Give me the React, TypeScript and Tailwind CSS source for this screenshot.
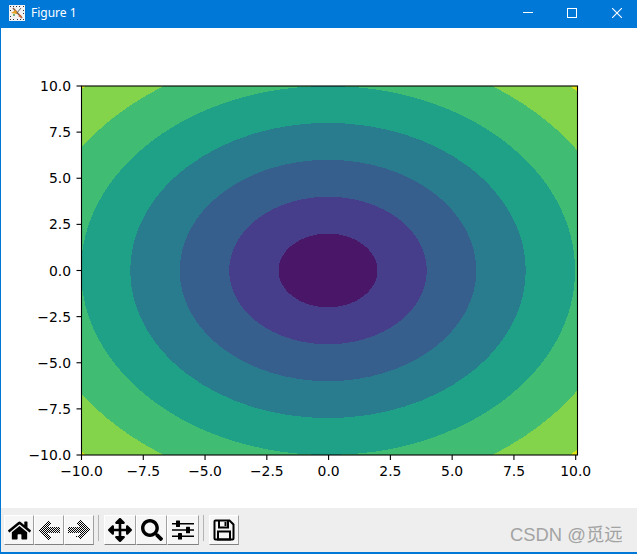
import * as React from "react"
import { FaArrowsAlt, FaHome, FaSearch } from "react-icons/fa"

const bands = [
  { r: 14, color: "#84d44b" },
  { r: 12, color: "#40bd72" },
  { r: 10, color: "#1fa187" },
  { r: 8, color: "#287c8e" },
  { r: 6, color: "#365f8d" },
  { r: 4, color: "#463e8a" },
  { r: 2, color: "#4a1768" },
]

const tickLabels = ["−10.0", "−7.5", "−5.0", "−2.5", "0.0", "2.5", "5.0", "7.5", "10.0"]

const scaleX = 24.71
const scaleY = 18.45
const centerX = 328
const centerY = 270.5

function Plot() {
  return (
    <svg viewBox="1 28 636 480" className="block h-[480px] w-[636px]">
      <defs>
        <clipPath id="axes">
          <rect x="81.5" y="86" width="496" height="369" />
        </clipPath>
      </defs>
      <g clipPath="url(#axes)" shapeRendering="crispEdges">
        <rect x="81" y="86" width="497" height="369" fill="#dde318" />
        {bands.map((b) => (
          <ellipse key={b.r} cx={centerX} cy={centerY} rx={b.r * scaleX} ry={b.r * scaleY} fill={b.color} />
        ))}
      </g>
      <rect x="81.5" y="86" width="496" height="369" fill="none" stroke="#000" strokeWidth="1.1" />
      {tickLabels.map((label, i) => {
        const x = 81.5 + i * 2.5 * scaleX
        const y = 86 + i * 2.5 * scaleY
        return (
          <g key={label} fill="#000" className="font-['DejaVu_Sans',sans-serif] text-[13.9px]">
            <line x1={x} x2={x} y1="455" y2="460" stroke="#000" strokeWidth="1.1" />
            <text x={x} y="476" textAnchor="middle">
              {label}
            </text>
            <line x1="76.5" x2="81.5" y1={y} y2={y} stroke="#000" strokeWidth="1.1" />
            <text x="71" y={y + 5} textAnchor="end">
              {tickLabels[8 - i]}
            </text>
          </g>
        )
      })}
    </svg>
  )
}

function ToolButton({ children, className }: { children: React.ReactNode; className?: string }) {
  return (
    <div
      className={`flex h-[30px] items-center justify-center border border-t-white border-l-white border-r-[#a0a0a0] border-b-[#808080] bg-[#f6f6f6] ${
        className ?? "w-[30px]"
      }`}
    >
      {children}
    </div>
  )
}

function DitherArrow({ flip }: { flip?: boolean }) {
  const id = flip ? "ditherR" : "ditherL"
  return (
    <svg viewBox="0 0 24 24" className={`h-[24px] w-[24px] ${flip ? "-scale-x-100" : ""}`} shapeRendering="crispEdges">
      <defs>
        <pattern id={id} width="2" height="2" patternUnits="userSpaceOnUse">
          <rect width="1" height="1" fill="#000" />
          <rect x="1" y="1" width="1" height="1" fill="#000" />
        </pattern>
      </defs>
      <path d="M1 12 11 2l3.5 3.5L10 9h13v6H10l4.5 3.5L11 22z" fill={`url(#${id})`} />
    </svg>
  )
}

function SlidersIcon() {
  return (
    <svg viewBox="0 0 22 20" className="h-[20px] w-[22px]" fill="#000">
      <path d="M0 3h22v1.6H0zM0 9.2h22v1.6H0zM0 15.4h22v1.6H0z" />
      <rect x="4" y="0.5" width="4" height="6.5" rx="0.6" />
      <rect x="14" y="6.8" width="4" height="6.5" rx="0.6" />
      <rect x="6" y="13" width="4" height="6.5" rx="0.6" />
    </svg>
  )
}

function SaveIcon() {
  return (
    <svg viewBox="0 0 22 22" className="h-[22px] w-[22px]" fill="none" stroke="#000" strokeWidth="2">
      <path d="M2.5 1.5h14l4 4v14a1 1 0 0 1-1 1h-17a1 1 0 0 1-1-1v-17a1 1 0 0 1 1-1z" />
      <path d="M6 2v6.5h9V2" />
      <rect x="5" y="12.5" width="12" height="8" />
      <rect x="11.5" y="3" width="2" height="4" fill="#000" stroke="none" />
    </svg>
  )
}

function Sep() {
  return <div className="ml-[4px] mr-[5px] h-[26px] w-px bg-[#b4b4b4]" />
}

export default function App() {
  return (
    <div className="relative flex h-[554px] w-[637px] flex-col overflow-hidden bg-white font-['Liberation_Sans',sans-serif]">
      <div className="flex h-[28px] shrink-0 items-center bg-[#0078d7] pb-[3px] pl-[9px] text-white">
        <svg viewBox="0 0 16 16" className="h-4 w-4 shrink-0">
          <rect width="16" height="16" fill="#f2f2f2" />
          <path d="M4 3l9 10" stroke="#8a5a3c" strokeWidth="1.5" />
          <path d="M12 3 7 9" stroke="#666" strokeWidth="1" />
          <path d="M2 8l5-3 1 4z" fill="#e8a020" />
          <path d="M9 11l3-1 1 3z" fill="#d8602c" />
          <circle cx="5" cy="10" r="1" fill="#4a9a50" />
          <path d="M1 1h1v1H1zM14 1h1v1h-1zM1 14h1v1H1zM14 14h1v1h-1zM7 1h1v1H7zM4 1h1v1H4zM10 1h1v1h-1zM1 5h1v1H1zM14 8h1v1h-1zM8 14h1v1H8zM4 14h1v1H4zM11 14h1v1h-1zM1 11h1v1H1zM14 5h1v1h-1z" fill="#334" />
        </svg>
        <span className="ml-[6px] font-['Noto_Sans',sans-serif] text-[12px] leading-none">Figure 1</span>
        <div className="ml-auto flex items-center">
          <div className="mr-[34px] h-px w-[10px] bg-white" />
          <div className="mr-[35px] h-[10px] w-[10px] border border-white" />
          <svg viewBox="0 0 10 10" className="mr-[15px] h-[10px] w-[10px]" stroke="#fff" strokeWidth="1.1">
            <path d="M0 0l10 10M10 0 0 10" />
          </svg>
        </div>
      </div>

      <div className="flex min-h-0 flex-1 border-l border-l-[#0078d7]">
        <div className="h-[480px] w-[636px]">
          <Plot />
        </div>
      </div>

      <div className="flex h-[44px] shrink-0 items-start border-l border-l-[#0078d7] bg-[#eeeeee] pl-[3px] pt-[7px]">
        <ToolButton>
          <FaHome className="h-[23px] w-[23px] text-black" />
        </ToolButton>
        <ToolButton>
          <DitherArrow />
        </ToolButton>
        <ToolButton>
          <DitherArrow flip />
        </ToolButton>
        <Sep />
        <ToolButton className="w-[32px]">
          <FaArrowsAlt className="h-[24px] w-[24px] text-black" />
        </ToolButton>
        <ToolButton className="w-[31px]">
          <FaSearch className="h-[22px] w-[22px] text-black" />
        </ToolButton>
        <ToolButton className="w-[32px]">
          <SlidersIcon />
        </ToolButton>
        <Sep />
        <ToolButton>
          <SaveIcon />
        </ToolButton>
      </div>
      <div className="h-[2px] shrink-0 bg-[#0078d7]" />

      <span className="absolute left-[510px] top-[523px] font-['Liberation_Sans','Noto_Sans_CJK_SC',sans-serif] text-[18.4px] leading-[24px] text-[#a3a3a3]">
        CSDN @觅远
      </span>
    </div>
  )
}
